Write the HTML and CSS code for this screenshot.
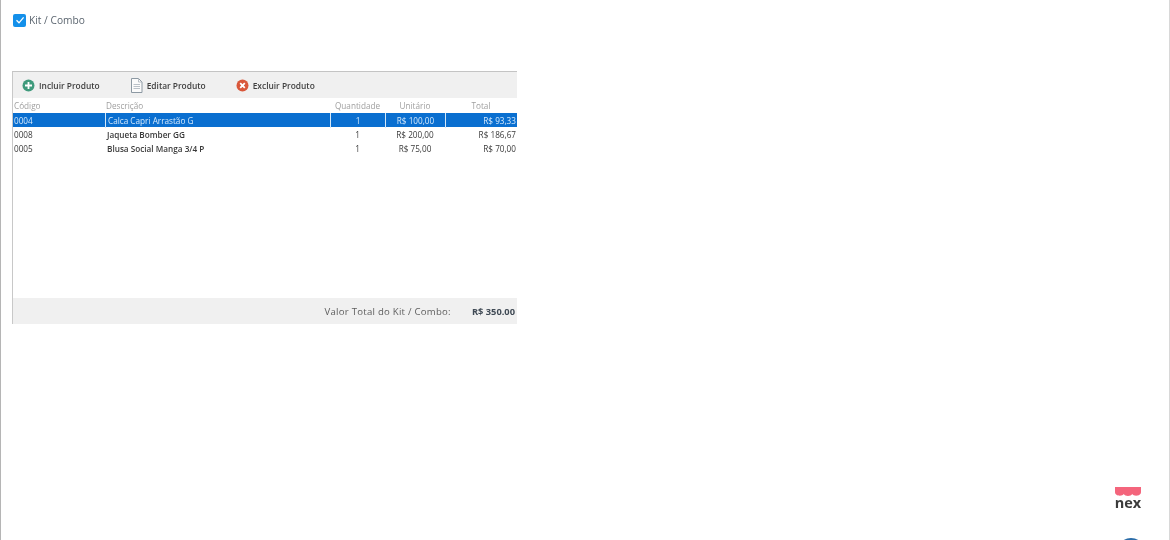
FILE: index.html
```html
<!DOCTYPE html>
<html lang="en">
<head>
<meta charset="UTF-8">
<meta name="viewport" content="width=device-width, initial-scale=1.0">
<title>Kit / Combo</title>
<link rel="stylesheet" href="styles.css">
</head>
<body>
    <div class="screen">
        <label class="kit-check">
            <span class="check-box">
                <svg width="12" height="12" viewBox="0 0 12 12"><path d="M2.5 6.3 L5 8.8 L9.6 3.4" fill="none" stroke="#fff" stroke-width="1.3"/></svg>
            </span>
            Kit / Combo
        </label>

        <div class="panel">
            <div class="toolbar">
                <div class="tool tool-add">
                    <svg width="13" height="13" viewBox="0 0 13 13"><circle cx="6.5" cy="6.5" r="6" fill="#3f9a7c"/><path d="M6.5 3 V10 M3 6.5 H10" stroke="#fff" stroke-width="1.8"/></svg>
                    Incluir Produto
                </div>
                <div class="tool tool-edit">
                    <svg width="13" height="15" viewBox="0 0 13 15"><path d="M1.5 .5 H8.5 L12 4 V14.5 H1.5 Z" fill="#fbfbfb" stroke="#8d99a3"/><path d="M8.5 .5 V4 H12 M3.5 6.5 H10 M3.5 8.5 H10 M3.5 10.5 H10" fill="none" stroke="#a9b3bb" stroke-width=".8"/></svg>
                    Editar Produto
                </div>
                <div class="tool tool-del">
                    <svg width="13" height="13" viewBox="0 0 13 13"><circle cx="6.5" cy="6.5" r="6" fill="#d9573a"/><path d="M4.2 4.2 L8.8 8.8 M8.8 4.2 L4.2 8.8" stroke="#fff" stroke-width="1.8"/></svg>
                    Excluir Produto
                </div>
            </div>

            <div class="grid-row grid-head">
                <div>Código</div>
                <div>Descrição</div>
                <div class="center">Quantidade</div>
                <div class="center">Unitário</div>
                <div class="center">Total</div>
            </div>
            <div class="grid-row selected">
                <div>0004</div>
                <div class="desc">Calca Capri Arrastão G</div>
                <div class="center">1</div>
                <div class="center">R$ 100,00</div>
                <div class="right">R$ 93,33</div>
            </div>
            <div class="grid-row">
                <div>0008</div>
                <div class="desc">Jaqueta Bomber GG</div>
                <div class="center">1</div>
                <div class="center">R$ 200,00</div>
                <div class="right">R$ 186,67</div>
            </div>
            <div class="grid-row">
                <div>0005</div>
                <div class="desc">Blusa Social Manga 3/4 P</div>
                <div class="center">1</div>
                <div class="center">R$ 75,00</div>
                <div class="right">R$ 70,00</div>
            </div>

            <div class="total-bar">
                <span class="total-label">Valor Total do Kit / Combo:</span>
                <span class="total-value">R$ 350.00</span>
            </div>
        </div>

        <div class="nex-logo">
            <svg width="26" height="9" viewBox="0 0 26 9"><path d="M0 0 H26 V5 C26 9.5 18.5 9.5 17.3 7 C16 9.5 10 9.5 8.7 7 C7.5 9.5 0 9.5 0 5 Z" fill="#f4657c"/></svg>
            <span>nex</span>
        </div>
        <div class="blue-dot"></div>
    </div>
</body>
</html>
```

FILE: styles.css
```css
* {
    margin: 0;
    padding: 0;
    box-sizing: border-box;
    font-family: 'Open Sans', sans-serif;
}
html, body {
    height: 100%;
    background-color: #fff;
    overflow: hidden;
}
.screen {
    position: relative;
    height: 540px;
    padding: 12px 0 0 11px;
    border-left: 1px solid #b5b5b5;
    border-right: 1px solid #d8d8d8;
    overflow: hidden;
    filter: blur(0.5px);
}
.kit-check {
    display: flex;
    align-items: center;
    gap: 3px;
    height: 16px;
    padding-left: 1px;
    font-size: 10.2px;
    color: #5c6670;
}
.check-box {
    display: flex;
    align-items: center;
    justify-content: center;
    width: 13px;
    height: 13px;
    border-radius: 2px;
    background-color: #1490ea;
}
.panel {
    display: flex;
    flex-direction: column;
    width: 505px;
    height: 253px;
    margin-top: 43px;
    border-top: 1px solid #c4c4c4;
    border-left: 1px solid #c8c8c8;
}
.toolbar {
    display: flex;
    align-items: center;
    height: 26px;
    background-color: #f0f0f0;
}
.tool {
    display: flex;
    align-items: center;
    gap: 4px;
    font-size: 8.4px;
    font-weight: 600;
    color: #3f3f3f;
    white-space: nowrap;
}
.tool-add {
    margin-left: 9px;
}
.tool-edit {
    margin-left: 30px;
}
.tool-del {
    margin-left: 30px;
}
.grid-row {
    display: grid;
    grid-template-columns: 92px 225px 55px 60px 72px;
    height: 14px;
    line-height: 15px;
    font-size: 8.2px;
    color: #3a3a3a;
}
.grid-row > div {
    padding: 0 1px;
    white-space: nowrap;
}
.grid-row .desc {
    font-weight: 600;
    padding-left: 2px;
}
.grid-head {
    height: 15px;
    line-height: 15px;
    color: #a0a0a0;
}
.selected {
    background-color: #0a6fd0;
    color: #d6eafc;
}
.selected > div + div {
    border-left: 1px solid #d5e8f8;
}
.selected .desc {
    font-weight: 400;
}
.center {
    text-align: center;
}
.right {
    text-align: right;
}
.total-bar {
    display: flex;
    align-items: center;
    justify-content: flex-end;
    height: 26px;
    margin-top: auto;
    padding-right: 2px;
    background-color: #f0f0f0;
    font-size: 9.6px;
    color: #5e5e5e;
}
.total-label {
    letter-spacing: 0.25px;
}
.total-value {
    margin-left: 21px;
    font-size: 9.3px;
    font-weight: 700;
    color: #404a55;
}
.nex-logo {
    position: absolute;
    left: 1114px;
    top: 487px;
    display: flex;
    flex-direction: column;
    align-items: center;
    width: 26px;
}
.nex-logo span {
    font-size: 14.5px;
    line-height: 14px;
    font-weight: 700;
    color: #3b3b3b;
}
.blue-dot {
    position: absolute;
    left: 1116px;
    top: 538px;
    width: 28px;
    height: 28px;
    border-radius: 50%;
    background-color: #2a6ca8;
}
```
